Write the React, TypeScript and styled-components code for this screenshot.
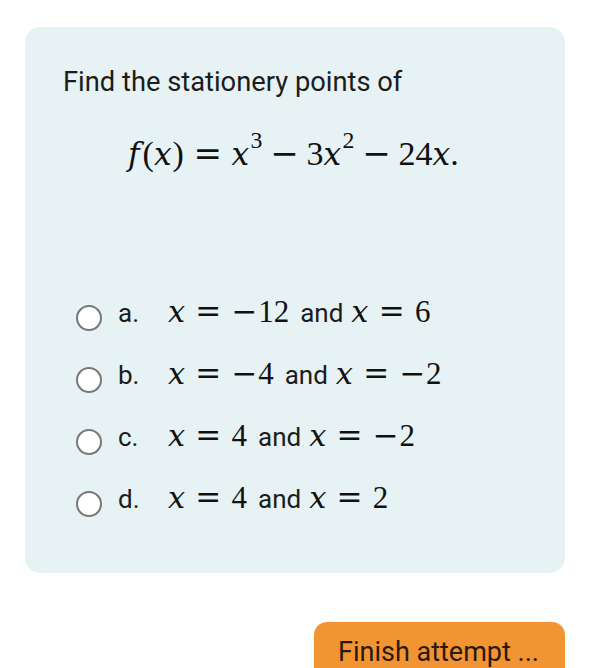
import React from "react"
import styled, { createGlobalStyle } from "styled-components"

const GlobalStyle = createGlobalStyle`
  html, body {
    margin: 0;
    padding: 0;
    background: #ffffff;
  }
  body {
    font-family: Roboto, "Liberation Sans", sans-serif;
    color: #1c1c1c;
  }
`

const Page = styled.div`
  display: flex;
  flex-direction: column;
  align-items: flex-end;
  width: 591px;
  height: 668px;
  overflow: hidden;
  padding: 27px 26px 0 25px;
  box-sizing: border-box;
`

const Card = styled.div`
  flex: none;
  display: flex;
  flex-direction: column;
  width: 100%;
  height: 546px;
  box-sizing: border-box;
  padding: 39px 38px 0 38px;
  background: #e6f2f4;
  border-radius: 15px;
`

const Prompt = styled.div`
  font-size: 27.3px;
  line-height: 33px;
`

const Display = styled.div`
  margin-top: 34px;
  padding-left: 65px;
  line-height: 40px;
`

const Options = styled.div`
  display: flex;
  flex-direction: column;
  margin-top: 101px;
  padding-left: 13px;
`

const Option = styled.label`
  display: flex;
  align-items: center;
  height: 62px;
`

const Radio = styled.span`
  flex: none;
  box-sizing: border-box;
  width: 26px;
  height: 26px;
  border: 2.3px solid #777777;
  border-radius: 50%;
  background: #ffffff;
  margin: 11px 16px 0 0;
`

const Line = styled.span`
  font-size: 26px;
  line-height: 36px;
  white-space: nowrap;
`

const Letter = styled.span`
  display: inline-block;
  width: 50px;
`

const Math = styled.span<{ $size: number }>`
  font-family: "Liberation Serif", "DejaVu Serif", serif;
  font-size: ${(p) => p.$size}px;
  color: #111111;
`

const Mi = styled.span<{ $scale?: number }>`
  font-family: "DejaVu Serif", serif;
  font-style: italic;
  font-size: ${(p) => p.$scale ?? 0.92}em;
`

const Paren = styled.span<{ $l?: number; $r?: number }>`
  margin: 0 ${(p) => p.$r ?? 0}px 0 ${(p) => p.$l ?? 0}px;
`

const Rel = styled.span<{ $gap?: number }>`
  font-family: "DejaVu Serif", serif;
  margin: 0 ${(p) => p.$gap ?? 0.28}em;
`

const Bin = styled.span`
  font-family: "DejaVu Serif", serif;
  margin: 0 0.23em;
`

const Neg = styled.span`
  font-family: "DejaVu Serif", serif;
  margin-right: 0.02em;
`

const Sup = styled.span`
  font-size: 0.7em;
  position: relative;
  top: -0.72em;
  margin-left: 0.06em;
`

const Word = styled.span`
  margin: 0 8px 0 11px;
`

const FinishButton = styled.button`
  flex: none;
  display: flex;
  align-items: flex-start;
  margin-top: 49px;
  width: 251px;
  height: 70px;
  border: none;
  border-radius: 13px;
  background: #f39433;
  color: #2a1a0d;
  font-family: Roboto, "Liberation Sans", sans-serif;
  font-size: 27px;
  text-align: left;
  padding: 14px 0 0 24px;
  cursor: pointer;
`

// a value like "−12" is split into a unary minus and its digits
const Num = ({ v }: { v: string }) =>
  v.startsWith("−") ? (
    <>
      <Neg>−</Neg>
      {v.slice(1)}
    </>
  ) : (
    <>{v}</>
  )

const Eq = ({ value }: { value: string }) => (
  <Math $size={31}>
    <Mi $scale={0.98}>x</Mi>
    <Rel $gap={0.33}>=</Rel>
    <Num v={value} />
  </Math>
)

type Choice = { letter: string; a: string; b: string }

const choices: Choice[] = [
  { letter: "a.", a: "−12", b: "6" },
  { letter: "b.", a: "−4", b: "−2" },
  { letter: "c.", a: "4", b: "−2" },
  { letter: "d.", a: "4", b: "2" },
]

export default function App() {
  return (
    <>
      <GlobalStyle />
      <Page>
        <Card>
          <Prompt>Find the stationery points of</Prompt>
          <Display>
            <Math $size={34}>
              <Mi>f</Mi>
              <Paren $l={3}>(</Paren>
              <Mi>x</Mi>
              <Paren $l={1}>)</Paren>
              <Rel>=</Rel>
              <Mi>x</Mi>
              <Sup>3</Sup>
              <Bin>−</Bin>3<Mi>x</Mi>
              <Sup>2</Sup>
              <Bin>−</Bin>24<Mi>x</Mi>.
            </Math>
          </Display>
          <Options>
            {choices.map((c) => (
              <Option key={c.letter}>
                <Radio />
                <Line>
                  <Letter>{c.letter}</Letter>
                  <Eq value={c.a} />
                  <Word>and</Word>
                  <Eq value={c.b} />
                </Line>
              </Option>
            ))}
          </Options>
        </Card>
        <FinishButton>Finish attempt ...</FinishButton>
      </Page>
    </>
  )
}
